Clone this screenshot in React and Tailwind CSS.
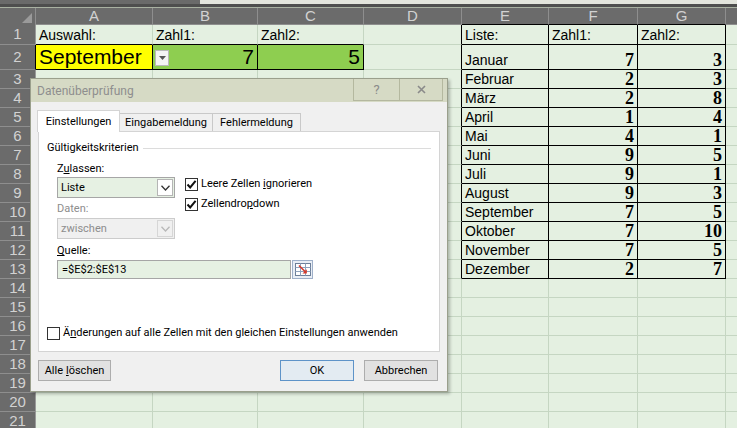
import React from "react";

const COLS = [
  { id: "A", w: "w-[117px]" },
  { id: "B", w: "w-[105px]" },
  { id: "C", w: "w-[106px]" },
  { id: "D", w: "w-[98px]" },
  { id: "E", w: "w-[87px]" },
  { id: "F", w: "w-[89px]" },
  { id: "G", w: "w-[88px]" },
  { id: "H", w: "w-[40px]" },
];

const MONTHS = [
  ["Januar", 7, 3],
  ["Februar", 2, 3],
  ["März", 2, 8],
  ["April", 1, 4],
  ["Mai", 4, 1],
  ["Juni", 9, 5],
  ["Juli", 9, 1],
  ["August", 9, 3],
  ["September", 7, 5],
  ["Oktober", 7, 10],
  ["November", 7, 5],
  ["Dezember", 2, 7],
];

const ROW_COUNT = 21;
const rowHeight = (r) => (r === 1 ? "h-[20px]" : r === 2 ? "h-[25px]" : "h-[19px]");

// cells with a thin black frame: A2:C2 and the list E1:G13
const framed = (c, r) => {
  if (r === 2 && c >= 0 && c <= 2) return true;
  if (c >= 4 && c <= 6 && r >= 1 && r <= 13) return true;
  return false;
};

const sansCell = { fontFamily: '"Liberation Sans", Arial, sans-serif' };
const serifNum = { fontFamily: '"Liberation Serif", "Times New Roman", serif' };

function cellContent(c, r) {
  const id = COLS[c].id;
  if (r === 1) {
    const heads = { A: "Auswahl:", B: "Zahl1:", C: "Zahl2:", E: "Liste:", F: "Zahl1:", G: "Zahl2:" };
    if (heads[id]) return <span className="pl-[3px] text-[14px] leading-[18px]">{heads[id]}</span>;
    return null;
  }
  if (r === 2 && id === "A") {
    return <span className="pl-[3px] text-[21px] leading-[24px]">September</span>;
  }
  if (r === 2 && id === "B") {
    return (
      <div className="flex w-full items-end justify-between">
        <div className="mb-[3px] ml-[2px] flex h-[16px] w-[14px] items-center justify-center border border-[#b9b9b9] bg-[#f4f4f4]">
          <svg width="7" height="4" viewBox="0 0 7 4">
            <path d="M0 0 L7 0 L3.5 4 Z" fill="#555" />
          </svg>
        </div>
        <span className="pr-[3px] text-[21px] leading-[24px]">7</span>
      </div>
    );
  }
  if (r === 2 && id === "C") {
    return <span className="ml-auto pr-[3px] text-[21px] leading-[24px]">5</span>;
  }
  if (r >= 2 && r <= 13) {
    const m = MONTHS[r - 2];
    if (id === "E") return <span className="pl-[3px] text-[14px] leading-[17px]">{m[0]}</span>;
    if (id === "F" || id === "G") {
      return (
        <span className="ml-auto pr-[3px] text-[18px] font-bold leading-[18px]" style={serifNum}>
          {id === "F" ? m[1] : m[2]}
        </span>
      );
    }
  }
  return null;
}

function cellBg(c, r) {
  if (r === 2 && c === 0) return "bg-[#ffff00]";
  if (r === 2 && (c === 1 || c === 2)) return "bg-[#8ece50]";
  return "bg-[#e4f0e1]";
}

function Sheet() {
  const rows = Array.from({ length: ROW_COUNT }, (_, i) => i + 1);
  return (
    <div className="flex flex-col" style={sansCell}>
      {/* toolbar edge above the grid */}
      <div className="flex h-[4px]">
        <div className="w-[200px] bg-[#6a6a6a]" />
        <div className="flex-1 bg-[#e2e4dc]" />
      </div>
      <div className="h-[3px] bg-[#4e4e4e]" />
      <div className="h-px bg-[#a9b1a2]" />

      {/* column letters */}
      <div className="flex h-[17px] bg-[#6b6b6b] text-[15px] text-[#d2d2d2]">
        <div className="relative w-[36px] shrink-0 border-r border-[#8e8e8e]">
          <svg className="absolute bottom-[2px] right-[3px]" width="10" height="10" viewBox="0 0 10 10">
            <path d="M10 0 L10 10 L0 10 Z" fill="#9a9a9a" />
          </svg>
        </div>
        {COLS.map((col, c) => (
          <div
            key={col.id}
            className={`${col.w} flex shrink-0 items-center justify-center border-r border-r-[#8e8e8e] border-b ${
              framed(c, 1) ? "border-b-black" : "border-b-[#8e8e8e]"
            } leading-[16px]`}
          >
            {col.id !== "H" && col.id}
          </div>
        ))}
      </div>

      {rows.map((r) => (
        <div key={r} className={`flex ${rowHeight(r)}`}>
          <div
            className={`flex w-[36px] shrink-0 items-center justify-center border-b border-b-[#8e8e8e] border-r ${
              framed(0, r) ? "border-r-black" : "border-r-[#9a9a9a]"
            } bg-[#6b6b6b] text-[15px] text-[#d2d2d2]`}
          >
            {r}
          </div>
          {COLS.map((col, c) => {
            const right = framed(c, r) || framed(c + 1, r) ? "border-r-black" : "border-r-[#c5d6c2]";
            const bottom = framed(c, r) || framed(c, r + 1) ? "border-b-black" : "border-b-[#c5d6c2]";
            return (
              <div
                key={col.id}
                className={`${col.w} flex shrink-0 items-end overflow-hidden border-r border-b ${right} ${bottom} ${cellBg(
                  c,
                  r
                )} text-black`}
              >
                {cellContent(c, r)}
              </div>
            );
          })}
        </div>
      ))}
    </div>
  );
}

function Check({ checked }) {
  return (
    <div className="flex h-[13px] w-[13px] shrink-0 items-center justify-center border border-[#333] bg-white">
      {checked && (
        <svg width="11" height="11" viewBox="0 0 11 11">
          <path d="M1.5 5.5 L4.2 8.4 L9.6 1.8" stroke="#111" strokeWidth="2" fill="none" />
        </svg>
      )}
    </div>
  );
}

function Chevron({ color }) {
  return (
    <svg width="9" height="6" viewBox="0 0 9 6">
      <path d="M0.5 0.8 L4.5 5 L8.5 0.8" stroke={color} strokeWidth="1.3" fill="none" />
    </svg>
  );
}

function Select({ value, disabled }) {
  return (
    <div
      className={`flex h-[21px] w-[118px] items-center border ${
        disabled ? "border-[#cccccc] bg-[#f0f0f0] text-[#8d8d8d]" : "border-[#a6a6a6] bg-[#e6f1e3] text-black"
      }`}
    >
      <span className="flex-1 pl-[3px]">{value}</span>
      <div
        className={`m-px flex h-[17px] w-[16px] items-center justify-center border ${
          disabled ? "border-[#d6d6d6] bg-[#f0f0f0]" : "border-[#b5b5b5] bg-white"
        }`}
      >
        <Chevron color={disabled ? "#b8b8b8" : "#333"} />
      </div>
    </div>
  );
}

function RangeIcon() {
  return (
    <div className="flex h-[19px] w-[21px] items-center justify-center border border-[#9fb0c9] bg-[#e9eef5]">
      <svg width="16" height="13" viewBox="0 0 16 13">
        <rect x="0.5" y="0.5" width="15" height="12" fill="#fff" stroke="#6d7f99" />
        <path d="M0.5 4.5 H15.5 M0.5 8.5 H15.5 M5.5 0.5 V12.5 M10.5 0.5 V12.5" stroke="#8fa2bd" />
        <path d="M4 2.5 L11 9.5" stroke="#d33a2c" strokeWidth="1.6" />
        <path d="M7.5 10.5 L11.8 10.5 L11.8 6.2 Z" fill="#d33a2c" />
      </svg>
    </div>
  );
}

function Dialog() {
  return (
    <div
      className="absolute left-[30px] top-[78px] flex h-[314px] w-[418px] flex-col border border-[#9a9f8c] bg-[#f0f0f0] text-[11px] leading-[14px] text-black shadow-[2px_2px_3px_rgba(0,0,0,0.25)]"
      style={{ fontFamily: 'Roboto, "Liberation Sans", sans-serif' }}
    >
      <div className="flex h-[23px] shrink-0 items-center bg-[#d6dac5]">
        <span className="pl-[6px] text-[12px] text-[#8e8e8e]">Datenüberprüfung</span>
        <div className="ml-auto mr-[4px] flex self-start">
          <div className="flex h-[22px] w-[46px] items-center justify-center border-b border-l border-[#b4b89f] text-[13px] text-[#8a8a8a]">
            ?
          </div>
          <div className="flex h-[22px] w-[44px] items-center justify-center border-b border-l border-r border-[#b4b89f]">
            <svg width="9" height="9" viewBox="0 0 9 9">
              <path d="M1 1 L8 8 M8 1 L1 8" stroke="#8a8a8a" strokeWidth="1.6" />
            </svg>
          </div>
        </div>
      </div>

      <div className="flex flex-col px-[7px] pt-[8px]">
        {/* tabs */}
        <div className="-ml-px flex h-[21px] items-end">
          <div className="relative z-10 -mb-px flex h-[22px] w-[83px] items-center justify-center border border-b-0 border-[#d4d4d4] bg-white">
            Einstellungen
          </div>
          <div className="flex h-[18px] w-[93px] items-center justify-center border border-b-0 border-l-0 border-[#c9c9c9] bg-[#f0f0f0]">
            Eingabemeldung
          </div>
          <div className="flex h-[18px] w-[88px] items-center justify-center border border-b-0 border-l-0 border-[#c9c9c9] bg-[#f0f0f0]">
            Fehlermeldung
          </div>
        </div>

        {/* tab page */}
        <div className="flex h-[221px] w-[402px] flex-col border border-[#d4d4d4] bg-white px-[8px] pb-[11px] pt-[9px]">
          <div className="flex items-center gap-[4px]">
            <span>Gültigkeitskriterien</span>
            <div className="h-px flex-1 bg-[#dcdcdc]" />
          </div>

          <div className="flex pl-[10px]">
            <div className="flex w-[118px] flex-col">
              <span className="mt-[7px]">
                Z<span className="underline">u</span>lassen:
              </span>
              <div className="mt-px">
                <Select value="Liste" />
              </div>
              <span className="mt-[4px] text-[#8d8d8d]">Daten:</span>
              <div className="mt-[2px]">
                <Select value="zwischen" disabled />
              </div>
            </div>
            <div className="ml-[10px] mt-[22px] flex flex-col gap-[6px]">
              <div className="flex items-center gap-[3px]">
                <Check checked />
                <span>
                  Leere Zellen <span className="underline">i</span>gnorieren
                </span>
              </div>
              <div className="flex items-center gap-[3px]">
                <Check checked />
                <span>
                  Zellendro<span className="underline">p</span>down
                </span>
              </div>
            </div>
          </div>

          <div className="flex flex-col pl-[10px]">
            <span className="mt-[5px]">
              <span className="underline">Q</span>uelle:
            </span>
            <div className="mt-[2px] flex items-center gap-[1px]">
              <div className="flex h-[19px] w-[234px] items-center border border-[#a6a6a6] bg-[#e6f1e3] pl-[4px]">
                =$E$2:$E$13
              </div>
              <RangeIcon />
            </div>
          </div>

          <div className="mt-auto flex items-center gap-[3px]">
            <Check />
            <span>
              Ä<span className="underline">n</span>derungen auf alle Zellen mit den gleichen Einstellungen anwenden
            </span>
          </div>
        </div>

        {/* buttons */}
        <div className="mt-[8px] flex w-[402px] items-center">
          <button className="flex h-[21px] w-[73px] items-center justify-center border border-[#adadad] bg-[#e1e1e1]">
            Alle <span className="ml-[3px] underline">l</span>öschen
          </button>
          <button className="ml-auto flex h-[21px] w-[74px] items-center justify-center border border-[#5e93c8] bg-[#e3ebf2]">
            OK
          </button>
          <button className="ml-[10px] mr-[2px] flex h-[21px] w-[74px] items-center justify-center border border-[#adadad] bg-[#e1e1e1]">
            Abbrechen
          </button>
        </div>
      </div>
    </div>
  );
}

export default function App() {
  return (
    <div className="relative h-[428px] w-[737px] overflow-hidden bg-[#e4f0e1]">
      <Sheet />
      <Dialog />
    </div>
  );
}
